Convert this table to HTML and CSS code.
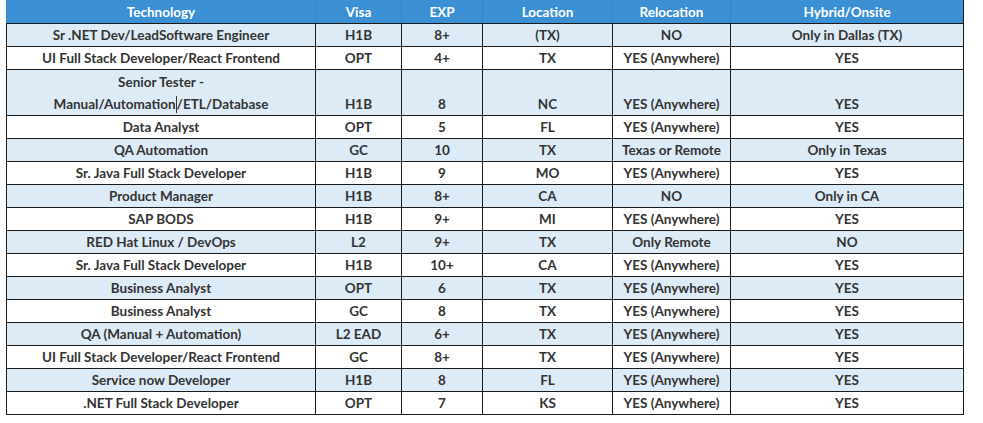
FILE: index.html
```html
<!DOCTYPE html>
<html>
<head>
<meta charset="utf-8">
<link rel="stylesheet" href="styles.css">
</head>
<body>
<div class="wrap">
<table class="grid">
<colgroup>
<col class="c-tech"><col class="c-visa"><col class="c-exp"><col class="c-loc"><col class="c-rel"><col class="c-hyb">
</colgroup>
<thead>
<tr><th>Technology</th><th>Visa</th><th>EXP</th><th>Location</th><th>Relocation</th><th>Hybrid/Onsite</th></tr>
</thead>
<tbody>
<tr class="alt"><td>Sr .NET Dev/LeadSoftware Engineer</td><td>H1B</td><td>8+</td><td>(TX)</td><td>NO</td><td>Only in Dallas (TX)</td></tr>
<tr><td>UI Full Stack Developer/React Frontend</td><td>OPT</td><td>4+</td><td>TX</td><td>YES (Anywhere)</td><td>YES</td></tr>
<tr class="alt tall"><td>Senior Tester -<br>Manual/Automation<span class="caret"></span>/ETL/Database</td><td>H1B</td><td>8</td><td>NC</td><td>YES (Anywhere)</td><td>YES</td></tr>
<tr><td>Data Analyst</td><td>OPT</td><td>5</td><td>FL</td><td>YES (Anywhere)</td><td>YES</td></tr>
<tr class="alt"><td>QA Automation</td><td>GC</td><td>10</td><td>TX</td><td>Texas or Remote</td><td>Only in Texas</td></tr>
<tr><td>Sr. Java Full Stack Developer</td><td>H1B</td><td>9</td><td>MO</td><td>YES (Anywhere)</td><td>YES</td></tr>
<tr class="alt"><td>Product Manager</td><td>H1B</td><td>8+</td><td>CA</td><td>NO</td><td>Only in CA</td></tr>
<tr><td>SAP BODS</td><td>H1B</td><td>9+</td><td>MI</td><td>YES (Anywhere)</td><td>YES</td></tr>
<tr class="alt"><td>RED Hat Linux / DevOps</td><td>L2</td><td>9+</td><td>TX</td><td>Only Remote</td><td>NO</td></tr>
<tr><td>Sr. Java Full Stack Developer</td><td>H1B</td><td>10+</td><td>CA</td><td>YES (Anywhere)</td><td>YES</td></tr>
<tr class="alt"><td>Business Analyst</td><td>OPT</td><td>6</td><td>TX</td><td>YES (Anywhere)</td><td>YES</td></tr>
<tr><td>Business Analyst</td><td>GC</td><td>8</td><td>TX</td><td>YES (Anywhere)</td><td>YES</td></tr>
<tr class="alt"><td>QA (Manual + Automation)</td><td>L2 EAD</td><td>6+</td><td>TX</td><td>YES (Anywhere)</td><td>YES</td></tr>
<tr><td>UI Full Stack Developer/React Frontend</td><td>GC</td><td>8+</td><td>TX</td><td>YES (Anywhere)</td><td>YES</td></tr>
<tr class="alt"><td>Service now Developer</td><td>H1B</td><td>8</td><td>FL</td><td>YES (Anywhere)</td><td>YES</td></tr>
<tr><td>.NET Full Stack Developer</td><td>OPT</td><td>7</td><td>KS</td><td>YES (Anywhere)</td><td>YES</td></tr>
</tbody>
</table>
</div>
</body>
</html>
```
FILE: styles.css
```css
html, body {
  margin: 0;
  padding: 0;
  background: #ffffff;
}
.wrap {
  padding: 0 0 0 6px;
}
.grid {
  border-collapse: collapse;
  table-layout: fixed;
  width: 957px;
  font-family: Lato, "Open Sans", sans-serif;
  font-weight: 700;
  font-size: 13.5px;
  color: #333333;
}
.c-tech { width: 309px; }
.c-visa { width: 86px; }
.c-exp { width: 81px; }
.c-loc { width: 130px; }
.c-rel { width: 118px; }
.c-hyb { width: 233px; }
.grid th {
  background: #3b8fd3;
  color: #ffffff;
  height: 23px;
  padding: 0;
  text-align: center;
  vertical-align: middle;
  border-left: 1px solid #3784c4;
  border-bottom: 1px solid #1a1a1a;
  line-height: 22px;
}
.grid th:first-child { border-left: 1px solid #3b8fd3; }
.grid th:last-child { border-right: 1px solid #1a1a1a; }
.grid td {
  border: 1px solid #1a1a1a;
  height: 22px;
  padding: 0;
  text-align: center;
  vertical-align: bottom;
  line-height: 22px;
  white-space: nowrap;
}
.grid tr.alt td { background: #ddebf7; }
.grid tr.tall td { height: 45px; }
.caret {
  display: inline-block;
  width: 1px;
  height: 17px;
  background: #333333;
  vertical-align: -4px;
}
```
